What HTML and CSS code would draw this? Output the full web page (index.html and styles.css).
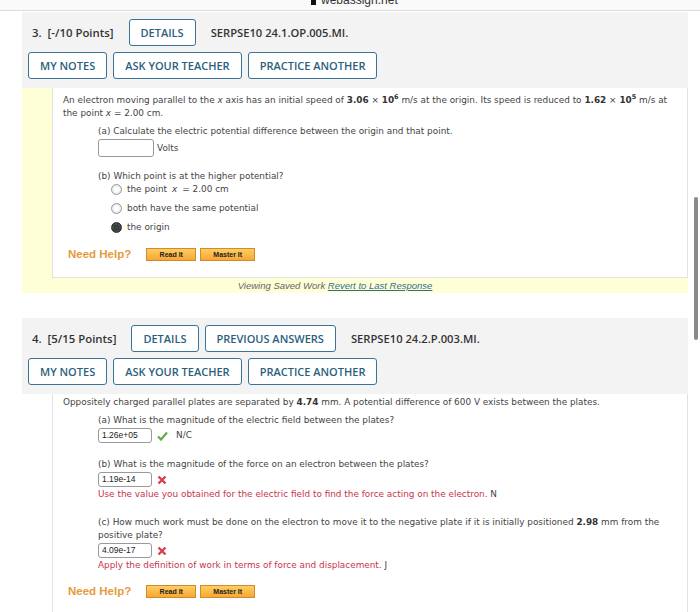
FILE: index.html
```html
<!DOCTYPE html>
<html lang="en">
<head>
    <meta charset="UTF-8">
    <meta name="viewport" content="width=device-width, initial-scale=1.0">
    <title>WebAssign</title>
    <link rel="stylesheet" href="styles.css">
</head>
<body>
    <div class="topbar">
        <span class="site"><span class="lock"></span>webassign.net</span>
    </div>

    <div class="page">
        <!-- Question 3 -->
        <div class="question">
            <div class="q-head">
                <div class="q-row">
                    <span class="q-points">3.&nbsp; [-/10 Points]</span>
                    <button class="q-btn">DETAILS</button>
                    <span class="q-code">SERPSE10 24.1.OP.005.MI.</span>
                </div>
                <div class="q-row">
                    <button class="q-btn">MY NOTES</button>
                    <button class="q-btn">ASK YOUR TEACHER</button>
                    <button class="q-btn">PRACTICE ANOTHER</button>
                </div>
            </div>
            <div class="q-body saved">
                <div class="q-content">
                    <p class="stem">An electron moving parallel to the <i>x</i> axis has an initial speed of <b>3.06</b> &times; <b>10<sup>6</sup></b> m/s at the origin. Its speed is reduced to <b>1.62</b> &times; <b>10<sup>5</sup></b> m/s at the point <i>x</i> = 2.00 cm.</p>

                    <div class="part">
                        <div class="part-label">(a) Calculate the electric potential difference between the origin and that point.</div>
                        <div class="answer-row">
                            <span class="answer-box big"></span>
                            <span class="unit">Volts</span>
                        </div>
                    </div>

                    <div class="part part-b">
                        <div class="part-label">(b) Which point is at the higher potential?</div>
                        <div class="choices">
                            <div class="choice"><span class="radio"></span>the point <i>x</i> = 2.00 cm</div>
                            <div class="choice"><span class="radio"></span>both have the same potential</div>
                            <div class="choice"><span class="radio checked"></span>the origin</div>
                        </div>
                    </div>

                    <div class="need-help">
                        <span class="help-label">Need Help?</span>
                        <span class="help-btn">Read It</span>
                        <span class="help-btn wide">Master It</span>
                    </div>
                </div>
            </div>
            <div class="saved-bar">Viewing Saved Work <a href="#">Revert to Last Response</a></div>
        </div>

        <!-- Question 4 -->
        <div class="question q4">
            <div class="q-head">
                <div class="q-row">
                    <span class="q-points">4.&nbsp; [5/15 Points]</span>
                    <button class="q-btn">DETAILS</button>
                    <button class="q-btn">PREVIOUS ANSWERS</button>
                    <span class="q-code">SERPSE10 24.2.P.003.MI.</span>
                </div>
                <div class="q-row">
                    <button class="q-btn">MY NOTES</button>
                    <button class="q-btn">ASK YOUR TEACHER</button>
                    <button class="q-btn">PRACTICE ANOTHER</button>
                </div>
            </div>
            <div class="q-body">
                <div class="q-content">
                    <p class="stem">Oppositely charged parallel plates are separated by <b>4.74</b> mm. A potential difference of 600 V exists between the plates.</p>

                    <div class="part">
                        <div class="part-label">(a) What is the magnitude of the electric field between the plates?</div>
                        <div class="answer-row">
                            <span class="answer-box">1.26e+05</span>
                            <svg class="mark" width="11" height="10" viewBox="0 0 11 10"><path d="M1 5.5 L4 8.5 L10 1.5" fill="none" stroke="#5cae45" stroke-width="2.2"/></svg>
                            <span class="unit">N/C</span>
                        </div>
                    </div>

                    <div class="part">
                        <div class="part-label">(b) What is the magnitude of the force on an electron between the plates?</div>
                        <div class="answer-row">
                            <span class="answer-box">1.19e-14</span>
                            <svg class="mark" width="10" height="10" viewBox="0 0 10 10"><path d="M1.5 1.5 L8.5 8.5 M8.5 1.5 L1.5 8.5" stroke="#d9404f" stroke-width="2.4"/></svg>
                        </div>
                        <div class="feedback"><span class="wrong">Use the value you obtained for the electric field to find the force acting on the electron.</span> N</div>
                    </div>

                    <div class="part">
                        <div class="part-label">(c) How much work must be done on the electron to move it to the negative plate if it is initially positioned <b>2.98</b> mm from the positive plate?</div>
                        <div class="answer-row">
                            <span class="answer-box">4.09e-17</span>
                            <svg class="mark" width="10" height="10" viewBox="0 0 10 10"><path d="M1.5 1.5 L8.5 8.5 M8.5 1.5 L1.5 8.5" stroke="#d9404f" stroke-width="2.4"/></svg>
                        </div>
                        <div class="feedback"><span class="wrong">Apply the definition of work in terms of force and displacement.</span> J</div>
                    </div>

                    <div class="need-help">
                        <span class="help-label">Need Help?</span>
                        <span class="help-btn">Read It</span>
                        <span class="help-btn wide">Master It</span>
                    </div>
                </div>
            </div>
        </div>
    </div>

    <div class="scrollbar"></div>
</body>
</html>
```

FILE: styles.css
```css
body {
    margin: 0;
    background-color: white;
    font-family: "DejaVu Sans", Verdana, sans-serif;
    color: #333;
    overflow: hidden;
}

.topbar {
    height: 10px;
    border-bottom: 1px solid #dcdcdc;
    background-color: #fafafa;
    overflow: hidden;
    padding-left: 311px;
}

.topbar .site {
    display: flex;
    align-items: center;
    gap: 5px;
    margin-top: -7px;
    font-family: "Liberation Sans", Arial, sans-serif;
    font-size: 12px;
    line-height: 14px;
    color: #333;
}

.topbar .lock {
    width: 5px;
    height: 5px;
    margin-top: 5px;
    background-color: #111;
}

.page {
    padding: 1px 12px 0 22px;
}

.question {
    width: 666px;
}

.q4 {
    margin-top: 25px;
}

/* header with buttons */
.q-head {
    background-color: #f3f3f3;
    padding: 7px 6px 9px 6px;
    font-family: "Open Sans", sans-serif;
}

.q-row {
    display: flex;
    align-items: center;
    gap: 6px;
}

.q-row + .q-row {
    margin-top: 6px;
}

.q-points {
    font-size: 11.4px;
    font-weight: 600;
    color: #333;
    margin-left: 4px;
    margin-right: 9px;
}

.q-code {
    font-size: 11.2px;
    font-weight: 600;
    color: #333;
    margin-left: 9px;
}

.q-btn {
    height: 27px;
    padding: 0 11px;
    background-color: white;
    border: 1.5px solid #3a7395;
    border-radius: 3px;
    font-family: "Open Sans", sans-serif;
    font-size: 11px;
    font-weight: 600;
    color: #2b5f7e;
}

/* question body */
.q-body {
    padding-left: 30px;
}

.q-body.saved {
    background-color: #ffffd7;
}

.q-content {
    background-color: white;
    border-left: 1px solid #e2e2e2;
    border-right: 1px solid #e2e2e2;
    padding: 6px 10px 16px 10px;
    font-size: 8.9px;
    line-height: 13px;
    color: #444;
}

.q-body.saved .q-content {
    border-bottom: 1px solid #e2e2e2;
}

.q4 .q-content {
    padding-top: 2px;
}

.stem {
    margin: 0;
}

.stem b,
.part-label b {
    color: #333;
}

sup {
    font-size: 6.5px;
    line-height: 0;
}

.part {
    margin: 5px 0 0 35px;
}

.q4 .part + .part {
    margin-top: 15px;
}

.answer-row {
    display: flex;
    align-items: center;
    gap: 5px;
    margin-top: 1px;
}

.answer-box {
    display: inline-flex;
    align-items: center;
    width: 46px;
    height: 13px;
    padding: 0 3px;
    border: 1px solid #999;
    border-radius: 3px;
    font-family: "Liberation Sans", Arial, sans-serif;
    font-size: 8.5px;
    color: #222;
}

.answer-box.big {
    height: 16px;
    width: 48px;
}

.unit {
    margin-left: -2px;
}

.mark {
    margin-right: 5px;
}

.feedback {
    margin-top: 1px;
}

.wrong {
    color: #c8344c;
}

.part-b {
    margin-top: 13px;
}

.choices {
    margin: -3px 0 0 13px;
}

.choice {
    display: flex;
    align-items: center;
    gap: 5px;
    height: 19px;
}

.radio {
    width: 9px;
    height: 9px;
    border: 1px solid #999;
    border-radius: 50%;
    background: radial-gradient(circle, #fff 30%, #d6d6d6 100%);
}

.radio.checked {
    border-color: #333;
    background: radial-gradient(circle, #444 0 30%, #222 35% 100%);
    box-shadow: inset 0 0 0 2px #4a4a4a;
}

/* need help */
.need-help {
    display: flex;
    align-items: center;
    gap: 4px;
    height: 14px;
    margin: 10px 0 0 5px;
}

.q4 .need-help {
    margin-top: 12px;
}

.help-label {
    font-family: "Liberation Sans", Arial, sans-serif;
    font-size: 11.5px;
    font-weight: bold;
    color: #e69a3c;
    margin-right: 11px;
}

.help-btn {
    display: inline-flex;
    align-items: center;
    justify-content: center;
    width: 48px;
    height: 11px;
    border: 1px solid #d18a2c;
    background: linear-gradient(#ffce62, #f7a734);
    font-family: "Liberation Sans", Arial, sans-serif;
    font-size: 7px;
    font-weight: bold;
    color: #222;
}

.help-btn.wide {
    width: 53px;
}

.saved-bar {
    height: 15px;
    line-height: 15px;
    padding-right: 40px;
    background-color: #ffffd7;
    text-align: center;
    font-family: "Liberation Sans", Arial, sans-serif;
    font-size: 9.5px;
    font-style: italic;
    color: #666;
}

.saved-bar a {
    color: #2f6f8e;
}

.scrollbar {
    position: absolute;
    left: 694px;
    top: 197px;
    width: 4px;
    height: 143px;
    border-radius: 2px;
    background-color: #8a8a8a;
}
```
